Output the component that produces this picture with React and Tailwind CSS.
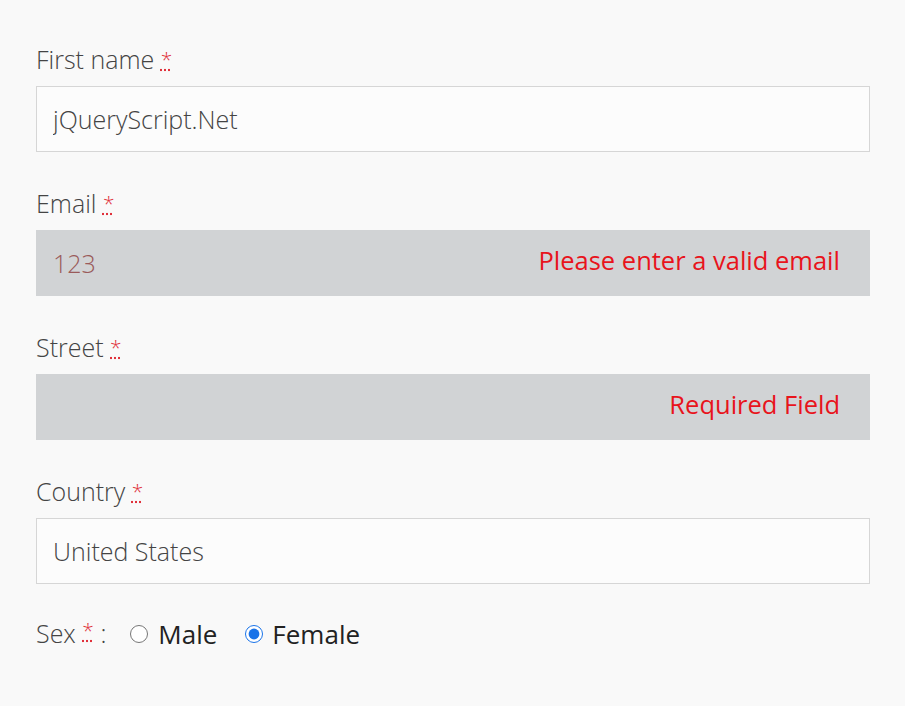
import { useState } from 'react';

const FIELDS = [
  { label: 'First name', value: 'jQueryScript.Net' },
  { label: 'Email', value: '123', error: 'Please enter a valid email' },
  { label: 'Street', value: '', error: 'Required Field' },
  { label: 'Country', value: 'United States' },
];

function Req() {
  return (
    <abbr title="required" className="text-[#e0313b] text-[21px] align-top">*</abbr>
  );
}

function Field({ label, value, error }) {
  const [val, setVal] = useState(value);
  return (
    <div className="mb-[35px]">
      <label className="block h-[32px] leading-[32px] mb-[11px] text-[25px] font-light text-[#444]">
        {label} <Req />
      </label>
      <div className="relative">
        <input
          value={val}
          onChange={(e) => setVal(e.target.value)}
          className={
            error
              ? 'block w-full h-[66px] px-4 border border-[#d1d3d5] bg-[#d1d3d5] text-[25px] font-light text-[#9a5a5a] outline-none'
              : 'block w-full h-[66px] px-4 border border-[#d6d6d6] bg-[#fcfcfc] text-[25px] font-light text-[#444] outline-none'
          }
        />
        {error && (
          <span className="absolute right-[30px] top-0 h-[66px] leading-[60px] text-[25.5px] text-[#e8141c]">
            {error}
          </span>
        )}
      </div>
    </div>
  );
}

export default function App() {
  const [sex, setSex] = useState('female');
  return (
    <div className="min-h-[706px] bg-[#f9f9f9] pt-[43px] px-[36px] font-['Open_Sans','Noto_Sans',sans-serif]">
      <div className="w-[834px]">
        {FIELDS.map((f) => (
          <Field key={f.label} {...f} />
        ))}
        <div className="flex items-center h-[30px]">
          <span className="text-[25px] font-light text-[#444]">Sex <Req /> :</span>
          <label className="flex items-center ml-[24px] text-[26px] text-[#222]">
            <input type="radio" name="sex" checked={sex === 'male'} onChange={() => setSex('male')} className="w-[18px] h-[18px] m-0 mr-[10px] accent-[#1a73e8]" />
            Male
          </label>
          <label className="flex items-center ml-[28px] text-[26px] text-[#222]">
            <input type="radio" name="sex" checked={sex === 'female'} onChange={() => setSex('female')} className="w-[18px] h-[18px] m-0 mr-[9px] accent-[#1a73e8]" />
            Female
          </label>
        </div>
      </div>
    </div>
  );
}
